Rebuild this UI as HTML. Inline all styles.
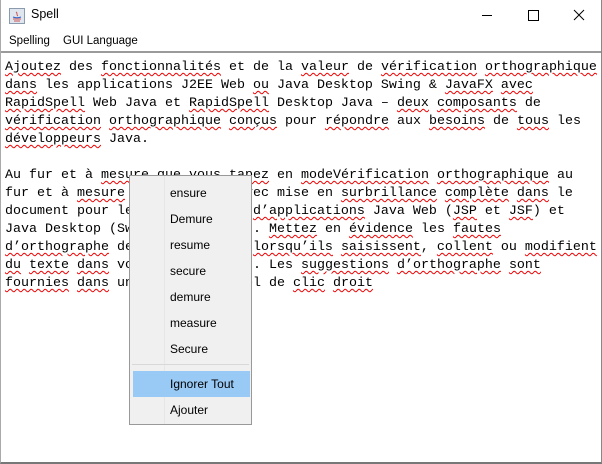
<!DOCTYPE html>
<html><head><meta charset="utf-8"><style>
body{margin:0;width:602px;height:464px;overflow:hidden;background:#fff;position:relative;font-family:"Liberation Sans",sans-serif}
.win{position:absolute;left:0;top:0;width:600px;height:462px;border-right:1px solid #888;border-bottom:2px solid #777;border-left:1px solid #aaa}
.title{position:absolute;left:30px;top:7px;font-size:12.5px;color:#000}
.menu{position:absolute;top:35px;font-size:11.5px;color:#000}
.ta{position:absolute;left:0;top:51px;width:600px;height:410px;border-top:2px solid #9a9a9a}
pre{margin:0;position:absolute;left:4px;top:6px;font-family:"Liberation Mono",monospace;font-size:13.33px;line-height:18px;color:#000}
.u{text-decoration:underline wavy #e00;text-decoration-thickness:1px;text-underline-offset:2px}
.pop{position:absolute;left:128px;top:175px;width:121px;height:248px;background:#f0f0f0;border:1px solid #999}
.it{position:absolute;left:40px;font-size:12px;color:#000}
.hl{position:absolute;left:3px;top:195px;width:117px;height:26px;background:#99c9f5}
.sep{position:absolute;left:2px;top:188px;width:117px;height:1px;background:#d8d8d8}
.gut{position:absolute;left:34px;top:0;width:1px;height:248px;background:#e6e6e6}
</style></head><body>
<div class="win">
<svg style="position:absolute;left:8px;top:8px" width="16" height="16"><rect x="0.5" y="0.5" width="15" height="15" fill="#dfe6ee" stroke="#8a9bb0"/><path d="M4 11h8M5 13h6M7 4c2 1 0 3 2 4" stroke="#c55" fill="none"/><path d="M4 9c2 1 6 1 8 0" stroke="#36c" fill="none"/></svg>
<div class="title">Spell</div>
<svg style="position:absolute;left:480px;top:8px" width="110" height="16"><path d="M1 7.5h10" stroke="#000"/><rect x="47.5" y="2.5" width="10" height="10" fill="none" stroke="#000"/><path d="M93 2l10 10M103 2l-10 10" stroke="#000"/></svg>
<div class="menu" style="left:8px">Spelling</div>
<div class="menu" style="left:62px">GUI Language</div>
<div class="ta">
<pre><span class="u">Ajoutez</span> des <span class="u">fonctionnalités</span> et de la <span class="u">valeur</span> de <span class="u">vérification</span> <span class="u">orthographique</span>
<span class="u">dans</span> les applications J2EE Web <span class="u">ou</span> Java Desktop Swing &amp; <span class="u">JavaFX</span> <span class="u">avec</span>
<span class="u">RapidSpell</span> Web Java et <span class="u">RapidSpell</span> Desktop Java – <span class="u">deux</span> <span class="u">composants</span> de
<span class="u">vérification</span> <span class="u">orthographique</span> <span class="u">conçus</span> pour <span class="u">répondre</span> aux <span class="u">besoins</span> de <span class="u">tous</span> les
<span class="u">développeurs</span> Java.

Au fur et à <span class="u">mesure</span> <span class="u">que</span> <span class="u">vous</span> <span class="u">tapez</span> en <span class="u">modeVérification</span> <span class="u">orthographique</span> au
fur et à <span class="u">mesure</span> de la frappe avec mise en <span class="u">surbrillance</span> <span class="u">complète</span> <span class="u">dans</span> le
document pour les développeurs <span class="u">d’applications</span> Java Web (<span class="u">JSP</span> et <span class="u">JSF</span>) et
Java Desktop (Swing et JavaFX) . <span class="u">Mettez</span> en <span class="u">évidence</span> les <span class="u">fautes</span>
<span class="u">d’orthographe</span> des utilisateurs <span class="u">lorsqu’ils</span> <span class="u">saisissent</span>, <span class="u">collent</span> ou <span class="u">modifient</span>
<span class="u">du</span> <span class="u">texte</span> <span class="u">dans</span> votre application. Les <span class="u">suggestions</span> <span class="u">d’orthographe</span> <span class="u">sont</span>
<span class="u">fournies</span> <span class="u">dans</span> un menu contextuel de <span class="u">clic</span> <span class="u">droit</span></pre>
</div>
<div class="pop">
<div class="gut"></div>
<div class="it" style="top:10px">ensure</div>
<div class="it" style="top:36px">Demure</div>
<div class="it" style="top:62px">resume</div>
<div class="it" style="top:88px">secure</div>
<div class="it" style="top:114px">demure</div>
<div class="it" style="top:140px">measure</div>
<div class="it" style="top:166px">Secure</div>
<div class="sep"></div>
<div class="hl"></div>
<div class="it" style="top:201px">Ignorer Tout</div>
<div class="it" style="top:227px">Ajouter</div>
</div>
</div>
</body></html>
